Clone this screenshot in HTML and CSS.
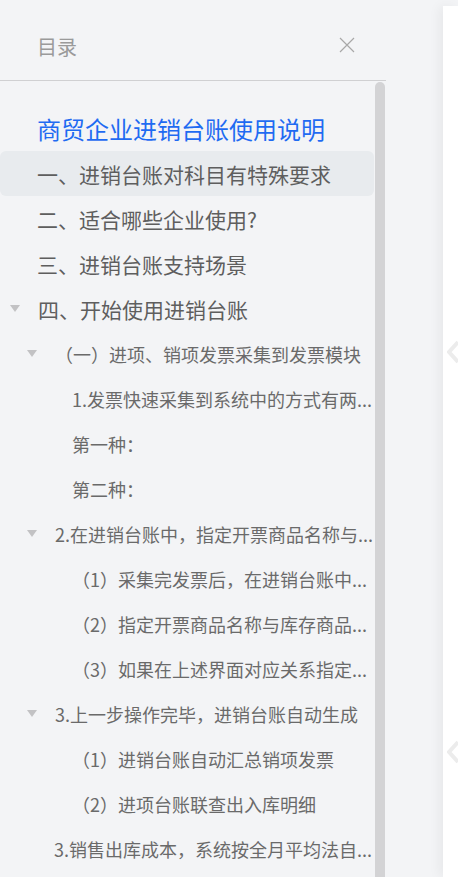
FILE: index.html
```html
<!DOCTYPE html>
<html lang="zh-CN">

<head>
	<meta charset="UTF-8">
	<meta name="viewport" content="width=device-width, initial-scale=1.0">
	<link rel="stylesheet" href="styles.css">
	<title>目录</title>
</head>

<body>
	<aside class="toc">
		<div class="toc-header">
			<span class="toc-title">目录</span>
			<button class="toc-close" aria-label="关闭">
				<svg width="16" height="16" viewBox="0 0 16 16">
					<path d="M1 1 L15 15 M15 1 L1 15" stroke="#a8a8a8" stroke-width="1.2" fill="none" />
				</svg>
			</button>
		</div>
		<div class="toc-body">
			<ul class="toc-list">
				<li class="toc-item doc-title"><span class="label">商贸企业进销台账使用说明</span></li>
				<li class="toc-item lv1 active"><span class="label">一、进销台账对科目有特殊要求</span></li>
				<li class="toc-item lv1"><span class="label">二、适合哪些企业使用?</span></li>
				<li class="toc-item lv1"><span class="label">三、进销台账支持场景</span></li>
				<li class="toc-item lv1"><span class="toggle"></span><span class="label">四、开始使用进销台账</span></li>
				<li class="toc-item lv2"><span class="toggle"></span><span class="label">（一）进项、销项发票采集到发票模块</span></li>
				<li class="toc-item lv3"><span class="label">1.发票快速采集到系统中的方式有两...</span></li>
				<li class="toc-item lv3"><span class="label">第一种：</span></li>
				<li class="toc-item lv3"><span class="label">第二种：</span></li>
				<li class="toc-item lv2"><span class="toggle"></span><span class="label">2.在进销台账中，指定开票商品名称与...</span></li>
				<li class="toc-item lv3"><span class="label">（1）采集完发票后，在进销台账中...</span></li>
				<li class="toc-item lv3"><span class="label">（2）指定开票商品名称与库存商品...</span></li>
				<li class="toc-item lv3"><span class="label">（3）如果在上述界面对应关系指定...</span></li>
				<li class="toc-item lv2"><span class="toggle"></span><span class="label">3.上一步操作完毕，进销台账自动生成</span></li>
				<li class="toc-item lv3"><span class="label">（1）进销台账自动汇总销项发票</span></li>
				<li class="toc-item lv3"><span class="label">（2）进项台账联查出入库明细</span></li>
				<li class="toc-item lv2"><span class="label">3.销售出库成本，系统按全月平均法自...</span></li>
			</ul>
			<div class="scroll-thumb"></div>
		</div>
	</aside>

	<main class="doc-panel">
		<svg class="pager prev-top" width="12" height="24" viewBox="0 0 12 24">
			<polyline points="11,2 2,12 11,22" stroke="#ececec" stroke-width="4" fill="none" />
		</svg>
		<svg class="pager prev-bottom" width="12" height="24" viewBox="0 0 12 24">
			<polyline points="11,2 2,12 11,22" stroke="#ececec" stroke-width="4" fill="none" />
		</svg>
	</main>
</body>

</html>
```

FILE: styles.css
```css
body {
	display: flex;
	margin: 0;
	height: 100vh;
	overflow: hidden;
	background-color: #f3f4f6;
	font-family: "Noto Sans CJK SC", "Noto Sans", sans-serif;
}

.toc {
	display: flex;
	flex-direction: column;
	width: 386px;
	flex-shrink: 0;
}

.toc-header {
	display: flex;
	align-items: center;
	justify-content: space-between;
	height: 81px;
	padding: 0 31px 0 37px;
	border-bottom: 1px solid #d0d0d2;
	box-sizing: border-box;
}

.toc-title {
	font-size: 20px;
	color: #9a9a9a;
	margin-top: 12px;
}

.toc-close {
	display: flex;
	padding: 0;
	border: none;
	background: none;
	margin-top: 10px;
	cursor: pointer;
}

.toc-body {
	display: flex;
	flex: 1;
	min-height: 0;
}

.toc-list {
	list-style: none;
	margin: 0;
	padding: 25px 0 0;
	width: 374px;
}

.toc-item {
	display: flex;
	align-items: center;
	height: 45px;
	border-radius: 6px;
	color: #6a6a6a;
	font-size: 18px;
}

.toc-item .label {
	white-space: nowrap;
}

.doc-title {
	padding-left: 37px;
	font-size: 24px;
	color: #1f6bf2;
}

.lv1 {
	padding-left: 37px;
	font-size: 21px;
	color: #5e5e5e;
}

.lv2 {
	padding-left: 54px;
}

.lv3 {
	padding-left: 72px;
}

.active {
	background-color: #e8ebee;
}

.toggle {
	flex-shrink: 0;
	width: 0;
	height: 0;
	margin-left: -27px;
	margin-right: 18px;
	border-left: 5px solid transparent;
	border-right: 5px solid transparent;
	border-top: 7px solid #c2c2c4;
}

.scroll-thumb {
	width: 10px;
	margin: 1px 0 0 1px;
	border-radius: 5px 5px 0 0;
	background-color: #d3d3d5;
}

.doc-panel {
	position: relative;
	flex: 1;
	margin: 6px 0 0 57px;
	background-color: #ffffff;
	box-shadow: -4px 0 12px rgba(0, 0, 0, 0.05);
}

.pager {
	position: absolute;
	left: 4px;
}

.prev-top {
	top: 334px;
}

.prev-bottom {
	top: 734px;
}
```
